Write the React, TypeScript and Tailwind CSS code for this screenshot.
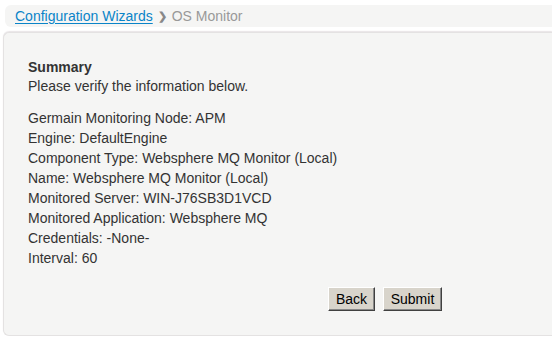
const details = [
  "Germain Monitoring Node: APM",
  "Engine: DefaultEngine",
  "Component Type: Websphere MQ Monitor (Local)",
  "Name: Websphere MQ Monitor (Local)",
  "Monitored Server: WIN-J76SB3D1VCD",
  "Monitored Application: Websphere MQ",
  "Credentials: -None-",
  "Interval: 60",
];

export default function App() {
  return (
    <div className="w-[552px] h-[353px] bg-white font-['Liberation_Sans',Arial,sans-serif] text-[14px] text-[#333]">
      <div className="pt-[5px] pl-[5px]">
        {/* breadcrumb */}
        <div className="h-[22px] bg-[#f5f5f4] rounded-l-[6px] flex items-center pl-[10px] text-[14px]">
          <a href="#" className="text-[#0a84c8] underline underline-offset-2">
            Configuration Wizards
          </a>
          <span className="mx-[5px] text-[#888] text-[11px] font-bold">&#10095;</span>
          <span className="text-[#999]">OS Monitor</span>
        </div>
      </div>

      {/* panel */}
      <div className="mt-[5px] ml-[3px] h-[304px] bg-[#f5f5f4] border border-[#e4e2e2] border-r-0 rounded-l-[6px] shadow-[0_-1px_1px_rgba(200,190,195,0.4)] pl-[24px] pt-[25px]">
        <div className="font-bold leading-[19px]">Summary</div>
        <div className="leading-[19px]">Please verify the information below.</div>
        <div className="mt-[12px] flex flex-col">
          {details.map((d) => (
            <div key={d} className="leading-[20px]">
              {d}
            </div>
          ))}
        </div>
        <div className="mt-[19px] flex gap-[8px] pl-[300px]">
          <button className="h-[24px] w-[47px] bg-[#d8d4cb] text-black text-[14px] border border-t-white border-l-white border-r-[#404040] border-b-[#404040] shadow-[inset_-1px_-1px_0_#888]">
            Back
          </button>
          <button className="h-[24px] w-[59px] bg-[#d8d4cb] text-black text-[14px] border border-t-white border-l-white border-r-[#404040] border-b-[#404040] shadow-[inset_-1px_-1px_0_#888]">
            Submit
          </button>
        </div>
      </div>
    </div>
  );
}
